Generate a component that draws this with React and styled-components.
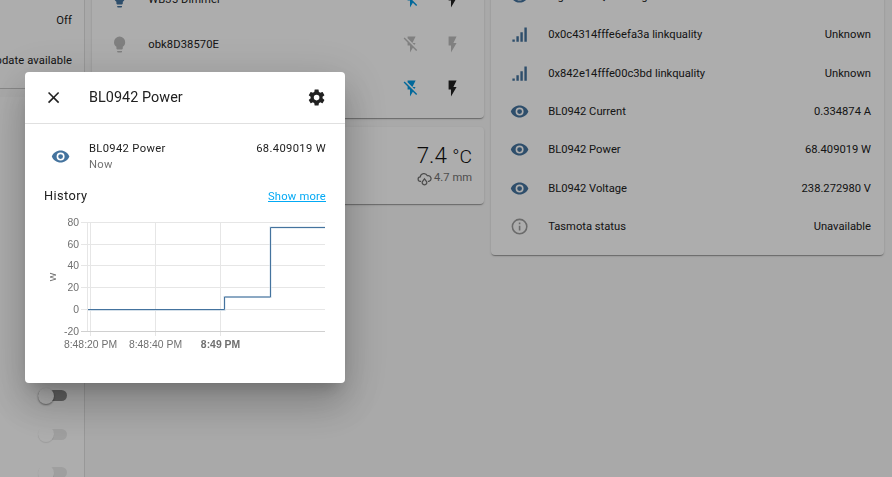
import styled, { createGlobalStyle } from 'styled-components';

const GlobalStyle = createGlobalStyle`
  html, body {
    margin: 0;
    padding: 0;
    background: #fafafa;
    overflow: hidden;
  }
  * {
    box-sizing: border-box;
  }
  body {
    font-family: Roboto, "Liberation Sans", sans-serif;
    color: #212121;
  }
`;

const icons = {
  eye: 'M12,9A3,3 0 0,0 9,12A3,3 0 0,0 12,15A3,3 0 0,0 15,12A3,3 0 0,0 12,9M12,17A5,5 0 0,1 7,12A5,5 0 0,1 12,7A5,5 0 0,1 17,12A5,5 0 0,1 12,17M12,4.5C7,4.5 2.73,7.61 1,12C2.73,16.39 7,19.5 12,19.5C17,19.5 21.27,16.39 23,12C21.27,7.61 17,4.5 12,4.5Z',
  close: 'M19,6.41L17.59,5L12,10.59L6.41,5L5,6.41L10.59,12L5,17.59L6.41,19L12,13.41L17.59,19L19,17.59L13.41,12L19,6.41Z',
  cog: 'M12,15.5A3.5,3.5 0 0,1 8.5,12A3.5,3.5 0 0,1 12,8.5A3.5,3.5 0 0,1 15.5,12A3.5,3.5 0 0,1 12,15.5M19.43,12.97C19.47,12.65 19.5,12.33 19.5,12C19.5,11.67 19.47,11.34 19.43,11L21.54,9.37C21.73,9.22 21.78,8.95 21.66,8.73L19.66,5.27C19.54,5.05 19.27,4.96 19.05,5.05L16.56,6.05C16.04,5.66 15.5,5.32 14.87,5.07L14.5,2.42C14.46,2.18 14.25,2 14,2H10C9.75,2 9.54,2.18 9.5,2.42L9.13,5.07C8.5,5.32 7.96,5.66 7.44,6.05L4.95,5.05C4.73,4.96 4.46,5.05 4.34,5.27L2.34,8.73C2.21,8.95 2.27,9.22 2.46,9.37L4.57,11C4.53,11.34 4.5,11.67 4.5,12C4.5,12.33 4.53,12.65 4.57,12.97L2.46,14.63C2.27,14.78 2.21,15.05 2.34,15.27L4.34,18.73C4.46,18.95 4.73,19.03 4.95,18.95L7.44,17.94C7.96,18.34 8.5,18.68 9.13,18.93L9.5,21.58C9.54,21.82 9.75,22 10,22H14C14.25,22 14.46,21.82 14.5,21.58L14.87,18.93C15.5,18.67 16.04,18.34 16.56,17.94L19.05,18.95C19.27,19.03 19.54,18.95 19.66,18.73L21.66,15.27C21.78,15.05 21.73,14.78 21.54,14.63L19.43,12.97Z',
  bulb: 'M12,2A7,7 0 0,0 5,9C5,11.38 6.19,13.47 8,14.74V17A1,1 0 0,0 9,18H15A1,1 0 0,0 16,17V14.74C17.81,13.47 19,11.38 19,9A7,7 0 0,0 12,2M9,21A1,1 0 0,0 10,22H14A1,1 0 0,0 15,21V20H9V21Z',
  flash: 'M7,2V13H10V22L17,10H13L17,2H7Z',
  flashOff: 'M17,10H13L17,2H7V4.18L15.46,12.64M3.27,3L2,4.27L7,9.27V13H10V22L13.58,15.86L17.73,20L19,18.73L3.27,3Z',
  signal: 'M3,21H6V18H3M8,21H11V14H8M13,21H16V9H13M18,21H21V3H18V21Z',
  info: 'M11,9H13V7H11M12,20C7.59,20 4,16.41 4,12C4,7.59 7.59,4 12,4C16.41,4 20,7.59 20,12C20,16.41 16.41,20 12,20M12,2A10,10 0 0,0 2,12A10,10 0 0,0 12,22A10,10 0 0,0 22,12A10,10 0 0,0 12,2M11,17H13V11H11V17Z',
};

const Icon = ({ name, size = 19.2, color = '#44739e' }) => (
  <IconSvg viewBox="0 0 24 24" $size={size}>
    <path d={icons[name]} fill={color} />
  </IconSvg>
);

const RainCloud = () => (
  <IconSvg viewBox="0 0 24 24" $size={15}>
    <path
      d="M6.5 15.5H5.6A3.6 3.6 0 0 1 5.2 8.3 6 6 0 0 1 16.6 6.6 4.6 4.6 0 0 1 19 15.5H17.5"
      fill="none"
      stroke="#727272"
      strokeWidth="2"
      transform="translate(0 1)"
    />
    <path
      d="M12 12.5L15 16.6A3.6 3.6 0 1 1 9 16.6Z"
      fill="none"
      stroke="#727272"
      strokeWidth="2"
    />
  </IconSvg>
);

const rows = [
  { icon: 'eye', name: 'Zigbee2MQTT Bridge state', value: '' },
  { icon: 'signal', name: '0x0c4314fffe6efa3a linkquality', value: 'Unknown' },
  { icon: 'signal', name: '0x842e14fffe00c3bd linkquality', value: 'Unknown' },
  { icon: 'eye', name: 'BL0942 Current', value: '0.334874 A' },
  { icon: 'eye', name: 'BL0942 Power', value: '68.409019 W' },
  { icon: 'eye', name: 'BL0942 Voltage', value: '238.272980 V' },
  { icon: 'info', name: 'Tasmota status', value: 'Unavailable', muted: true },
];

const lights = [
  { name: 'WB35 Dimmer', on: true },
  { name: 'obk8D38570E', on: false },
  { name: '', on: true },
];

const toggles = [1, 0, 0, 0, 0, 0, 0, 1, 0, 0];

const yTicks = [
  { label: '80', y: 222.5 },
  { label: '60', y: 244.5 },
  { label: '40', y: 265.5 },
  { label: '20', y: 287.5 },
  { label: '0', y: 309.5 },
  { label: '-20', y: 331.5 },
];

const xTicks = [
  { label: '8:48:20 PM', x: 90.5 },
  { label: '8:48:40 PM', x: 155.5 },
  { label: '8:49 PM', x: 220.5, bold: true },
];

// chart coordinates are page coordinates, shifted by the svg origin
const Chart = () => (
  <ChartSvg viewBox="44 215 282 140">
    <line x1="87.5" y1="222" x2="87.5" y2="332" stroke="#e6e6e6" />
    {xTicks.map((t) => (
      <g key={t.label}>
        <line x1={t.x} y1="222" x2={t.x} y2="336" stroke="#e6e6e6" />
        <ChartText x={t.x} y="348" textAnchor="middle" $bold={t.bold}>
          {t.label}
        </ChartText>
      </g>
    ))}
    {yTicks.map((t) => (
      <g key={t.label}>
        <line x1="81" y1={t.y} x2="325" y2={t.y} stroke={t.label === '-20' ? '#d0d0d0' : '#e6e6e6'} />
        <ChartText x="79" y={t.y + 3.5} textAnchor="end">
          {t.label}
        </ChartText>
      </g>
    ))}
    <AxisLabel x="0" y="0" textAnchor="middle" transform="translate(56 277) rotate(-90)">
      W
    </AxisLabel>
    <path
      d="M88 310H224.5V297H270.5V227.5H325"
      fill="none"
      stroke="#d3dfe9"
      strokeWidth="2"
    />
    <path
      d="M88 309.5H224.5V297H270.5V227.5H325"
      fill="none"
      stroke="#44739e"
      strokeWidth="1"
    />
  </ChartSvg>
);

export default function App() {
  return (
    <>
      <GlobalStyle />
      <Page>
        <LeftColumn>
          <SideCard $height={89}>
            <SideRow>Off</SideRow>
            <SideRow>Update available</SideRow>
          </SideCard>
          <SideCard $top={11}>
            {toggles.map((dark, i) => (
              <ToggleRow key={i}>
                <Toggle $dark={dark}>
                  <Thumb $dark={dark} />
                </Toggle>
              </ToggleRow>
            ))}
          </SideCard>
        </LeftColumn>

        <MiddleColumn>
          <LightsCard>
            {lights.map((l, i) => (
              <LightRow key={i}>
                <Icon name="bulb" color={l.on ? '#44739e' : '#bdbdbd'} />
                <LightName>{l.name}</LightName>
                <Actions>
                  <Icon name="flashOff" color={l.on ? '#039be5' : '#bdbdbd'} />
                  <Icon name="flash" color={l.on ? '#212121' : '#bdbdbd'} />
                </Actions>
              </LightRow>
            ))}
          </LightsCard>
          <WeatherCard>
            <Temperature>
              7.4 <Unit>°C</Unit>
            </Temperature>
            <Rain>
              <RainCloud />
              4.7 mm
            </Rain>
          </WeatherCard>
        </MiddleColumn>

        <EntitiesCard>
          {rows.map((r) => (
            <EntityRow key={r.name}>
              <Icon name={r.icon} color={r.muted ? '#9e9e9e' : '#44739e'} />
              <EntityName>{r.name}</EntityName>
              <EntityValue>{r.value}</EntityValue>
            </EntityRow>
          ))}
        </EntitiesCard>
      </Page>

      <Backdrop />

      <Dialog>
        <DialogHeader>
          <Icon name="close" color="#212121" />
          <DialogTitle>BL0942 Power</DialogTitle>
          <Icon name="cog" color="#212121" />
        </DialogHeader>
        <DialogBody>
          <StateRow>
            <StateIcon>
              <Icon name="eye" />
            </StateIcon>
            <StateText>
              <StateName>BL0942 Power</StateName>
              <StateTime>Now</StateTime>
            </StateText>
            <StateValue>68.409019 W</StateValue>
          </StateRow>
          <HistoryHeader>
            <HistoryTitle>History</HistoryTitle>
            <ShowMore href="#">Show more</ShowMore>
          </HistoryHeader>
          <Chart />
        </DialogBody>
      </Dialog>
    </>
  );
}

const IconSvg = styled.svg`
  display: block;
  flex: none;
  width: ${(p) => p.$size}px;
  height: ${(p) => p.$size}px;
`;

const Page = styled.div`
  display: grid;
  grid-template-columns: 85px 392px 393px;
  column-gap: 7px;
  align-items: start;
  height: 477px;
  overflow: hidden;
  background: #fafafa;
`;

const Card = styled.div`
  background: #fff;
  border-radius: 4px;
  box-shadow: 0 2px 1px -1px rgba(0, 0, 0, 0.2), 0 1px 1px rgba(0, 0, 0, 0.14), 0 1px 3px rgba(0, 0, 0, 0.12);
`;

const LeftColumn = styled.div`
  display: flex;
  flex-direction: column;
  gap: 8px;
`;

const SideCard = styled.div`
  background: #fff;
  border-right: 1px solid #e0e0e0;
  border-bottom: ${(p) => (p.$height ? '1px solid #c8c8c8' : 'none')};
  height: ${(p) => (p.$height ? `${p.$height}px` : 'auto')};
  padding-top: ${(p) => p.$top || 0}px;
`;

const SideRow = styled.div`
  display: flex;
  justify-content: flex-end;
  align-items: center;
  height: 40px;
  padding-right: 12px;
  font-size: 11.2px;
  letter-spacing: 0.1px;
  white-space: nowrap;
`;

const ToggleRow = styled.div`
  display: flex;
  align-items: center;
  height: 38.4px;
  padding-left: 38px;
`;

const Toggle = styled.div`
  position: relative;
  width: 29px;
  height: 11px;
  border-radius: 6px;
  background: ${(p) => (p.$dark ? '#8e8e8e' : '#ebebeb')};
`;

const Thumb = styled.div`
  position: absolute;
  left: 0;
  top: -2.5px;
  width: 16px;
  height: 16px;
  border-radius: 50%;
  background: #fff;
  box-shadow: ${(p) => (p.$dark ? '0 1px 2px rgba(0, 0, 0, 0.45)' : '0 1px 1px rgba(0, 0, 0, 0.1)')};
`;

const MiddleColumn = styled.div`
  display: flex;
  flex-direction: column;
  gap: 9px;
  margin-top: -23px;
`;

const LightsCard = styled(Card)`
  padding-bottom: 6.6px;
`;

const LightRow = styled.div`
  display: flex;
  align-items: center;
  height: 44.8px;
  padding: 0 22px 0 18px;
`;

const LightName = styled.div`
  flex: 1;
  margin-left: 19px;
  font-size: 11.2px;
  letter-spacing: 0.1px;
`;

const Actions = styled.div`
  display: flex;
  gap: 22px;
`;

const WeatherCard = styled(Card)`
  display: flex;
  flex-direction: column;
  align-items: flex-end;
  height: 77px;
  padding: 14px 12px 0 0;
`;

const Temperature = styled.div`
  font-size: 22.4px;
  line-height: 29px;
  font-weight: 300;
  color: #111;
  white-space: pre;
`;

const Unit = styled.span`
  font-size: 19.2px;
`;

const Rain = styled.div`
  display: flex;
  align-items: center;
  gap: 2px;
  font-size: 11.2px;
  line-height: 14px;
  color: #727272;
`;

const EntitiesCard = styled(Card)`
  margin-top: -22.8px;
  padding-bottom: 8.8px;
`;

const EntityRow = styled.div`
  display: flex;
  align-items: center;
  height: 38.4px;
  padding: 0 13px 0 19px;
`;

const EntityName = styled.div`
  flex: 1;
  margin-left: 19px;
  font-size: 11.2px;
`;

const EntityValue = styled.div`
  font-size: 11.2px;
`;

const Backdrop = styled.div`
  position: fixed;
  inset: 0;
  background: rgba(0, 0, 0, 0.32);
`;

const Dialog = styled.div`
  position: fixed;
  left: 25px;
  top: 72px;
  width: 320px;
  height: 311px;
  background: #fff;
  border-radius: 4px;
  box-shadow: 0 11px 15px -7px rgba(0, 0, 0, 0.2), 0 24px 38px 3px rgba(0, 0, 0, 0.14), 0 9px 46px 8px rgba(0, 0, 0, 0.12);
`;

const DialogHeader = styled.div`
  display: flex;
  align-items: center;
  height: 52px;
  padding: 0 19px;
  border-bottom: 1px solid #e0e0e0;
`;

const DialogTitle = styled.div`
  flex: 1;
  margin-left: 25.8px;
  font-size: 14.4px;
  letter-spacing: 0.05px;
`;

const DialogBody = styled.div`
  padding: 0 19px;
`;

const StateRow = styled.div`
  display: flex;
  align-items: flex-start;
  padding-top: 18px;
`;

const StateIcon = styled.div`
  display: flex;
  align-items: center;
  height: 30px;
  margin-left: 7px;
`;

const StateText = styled.div`
  flex: 1;
  margin-left: 18.8px;
`;

const StateName = styled.div`
  font-size: 11.2px;
  line-height: 13px;
  letter-spacing: 0.35px;
`;

const StateTime = styled.div`
  margin-top: 3px;
  font-size: 11.2px;
  line-height: 13px;
  letter-spacing: 0.3px;
  color: #727272;
`;

const StateValue = styled.div`
  font-size: 11.2px;
  line-height: 13px;
  letter-spacing: 0.35px;
`;

const HistoryHeader = styled.div`
  display: flex;
  justify-content: space-between;
  align-items: center;
  margin-top: 16px;
`;

const HistoryTitle = styled.div`
  padding-bottom: 2px;
  font-size: 12.8px;
  letter-spacing: 0.4px;
`;

const ShowMore = styled.a`
  font-size: 11.2px;
  letter-spacing: 0.2px;
  color: #03a9f4;
`;

const ChartSvg = styled.svg`
  display: block;
  width: 282px;
  height: 140px;
  margin-top: 10px;
`;

const ChartText = styled.text`
  font-family: "Liberation Sans", Arial, sans-serif;
  font-size: 10.4px;
  fill: #707070;
  font-weight: ${(p) => (p.$bold ? 700 : 400)};
`;

const AxisLabel = styled.text`
  font-family: "Liberation Sans", Arial, sans-serif;
  font-size: 9px;
  fill: #707070;
`;
